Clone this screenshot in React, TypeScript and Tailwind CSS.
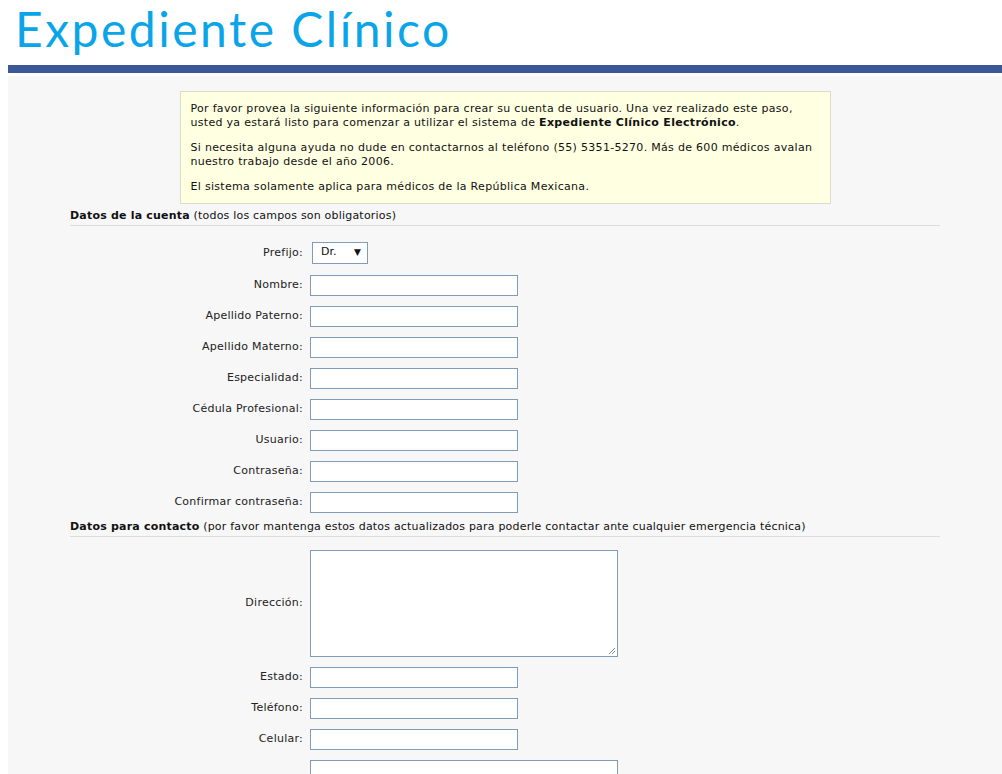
import React from 'react';

const FONT = { fontFamily: '"DejaVu Sans", Verdana, sans-serif' };

function TextInput() {
  return <div className="w-[208px] h-[21px] bg-white border border-[#7f9db9]" />;
}

function Row({ label, children }: { label: string; children: React.ReactNode }) {
  return (
    <div className="flex items-center">
      <div className="w-[240px] pr-[7px] text-right text-[11px] text-[#222] tracking-[0.25px]">{label}</div>
      {children}
    </div>
  );
}

function SectionHeader({ title, note }: { title: string; note: string }) {
  return (
    <div className="border-b border-[#dddddd] pb-[2px] text-[11px] leading-[14px] text-[#111] tracking-[0.2px]">
      <span className="font-bold">{title}</span> <span>{note}</span>
    </div>
  );
}

export default function App() {
  const cuenta = [
    'Nombre:',
    'Apellido Paterno:',
    'Apellido Materno:',
    'Especialidad:',
    'Cédula Profesional:',
    'Usuario:',
    'Contraseña:',
    'Confirmar contraseña:',
  ];

  return (
    <div className="min-h-[774px] bg-white pl-[8px]" style={FONT}>
      <div className="h-[65px] pl-[7px] pt-[1px]">
        <h1
          className="text-[48px] leading-[56px] font-normal text-[#0aa5e9] tracking-[2.5px]"
          style={{ fontFamily: 'Lato, "Open Sans", sans-serif' }}
        >
          Expediente Clínico
        </h1>
      </div>
      <div className="h-[8px] bg-[#3b5998]" />
      <div className="h-[3px] bg-white" />
      <div className="bg-[#f7f7f7] min-h-[698px] pt-[15px]">
        <div className="mx-auto w-[651px] border border-[#dcdcc8] bg-[#ffffe1] px-[10px] pt-[10px] pb-[9px] text-[11px] leading-[13.5px] text-[#111] tracking-[0.3px]">
          <p className="mb-[12px]">
            Por favor provea la siguiente información para crear su cuenta de usuario. Una vez realizado este paso,
            <br />
            usted ya estará listo para comenzar a utilizar el sistema de <b>Expediente Clínico Electrónico</b>.
          </p>
          <p className="mb-[12px]">
            Si necesita alguna ayuda no dude en contactarnos al teléfono (55) 5351-5270. Más de 600 médicos avalan
            <br />
            nuestro trabajo desde el año 2006.
          </p>
          <p>El sistema solamente aplica para médicos de la República Mexicana.</p>
        </div>

        <div className="mx-auto w-[870px] mt-[5px]">
          <SectionHeader title="Datos de la cuenta" note="(todos los campos son obligatorios)" />
          <div className="flex flex-col gap-[10px] pt-[16px]">
            <Row label="Prefijo:">
              <div className="ml-[2px] mb-[1px] flex h-[22px] w-[56px] items-center justify-between border border-[#7f9db9] bg-white pl-[8px] pr-[6px] text-[11px] text-[#111]">
                <span>Dr.</span>
                <span className="text-[9px]">▼</span>
              </div>
            </Row>
            {cuenta.map((l) => (
              <Row key={l} label={l}>
                <TextInput />
              </Row>
            ))}
          </div>

          <div className="mt-[7px]">
            <SectionHeader
              title="Datos para contacto"
              note="(por favor mantenga estos datos actualizados para poderle contactar ante cualquier emergencia técnica)"
            />
          </div>
          <div className="flex flex-col gap-[10px] pt-[13px]">
            <Row label="Dirección:">
              <div className="relative h-[107px] w-[308px] border border-[#7f9db9] bg-white">
                <svg className="absolute bottom-[1px] right-[1px]" width="8" height="8" viewBox="0 0 8 8">
                  <path d="M7 1L1 7M7 4L4 7" stroke="#888" strokeWidth="1" />
                </svg>
              </div>
            </Row>
            <Row label="Estado:">
              <TextInput />
            </Row>
            <Row label="Teléfono:">
              <TextInput />
            </Row>
            <Row label="Celular:">
              <TextInput />
            </Row>
            <Row label="">
              <div className="h-[107px] w-[308px] border border-[#7f9db9] bg-white" />
            </Row>
          </div>
        </div>
      </div>
    </div>
  );
}
